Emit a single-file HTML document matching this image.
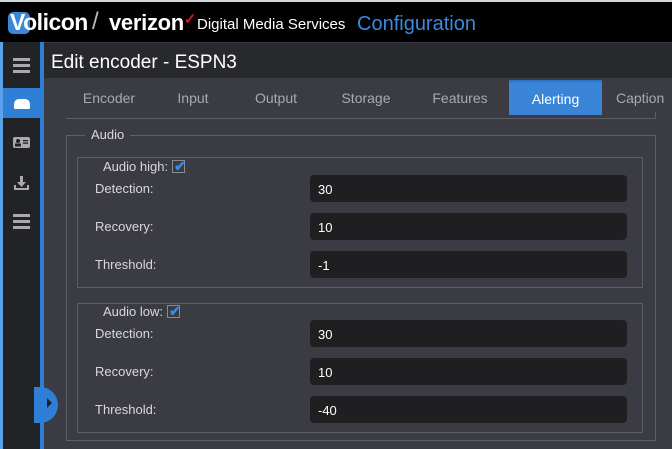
<!DOCTYPE html><html><head><style>
*{margin:0;padding:0;box-sizing:border-box}
body{width:672px;height:449px;overflow:hidden;background:#3b3c43;font-family:"Liberation Sans",sans-serif;position:relative}
.a{position:absolute}
.lab{position:absolute;color:#d8d8dc;font-size:13px}
.in{position:absolute;left:310px;width:317px;height:27px;background:#1f1f22;border-radius:4px;color:#fff;font-size:13px;padding:7px 0 0 8px}
.fs{position:absolute;border:1px solid #5e5f66}
.leg{position:absolute;background:#3b3c43;color:#d8d8dc;font-size:13px;padding:0 6px}
.cb{display:inline-block;width:13px;height:13px;border:1px solid #8a8b90;vertical-align:-2px;margin-left:4px;position:relative}
.tab{position:absolute;top:80px;height:35px;line-height:37px;color:#a9aab0;font-size:14px;text-align:center}
.bar{position:absolute;left:13px;width:17px;height:3px;background:#aaa}
</style></head><body>
<div class="a" style="left:0;top:0;width:672px;height:42px;background:#000"></div>
<div class="a" style="left:0;top:0;width:672px;height:2px;background:#cfd6de"></div>
<div class="a" style="left:8px;top:12px;width:22px;height:22px;background:#3b86d6;border-radius:5px"></div>
<div class="a" style="left:10px;top:9px;color:#fff;font-size:23px;font-weight:bold;letter-spacing:-0.5px">Volicon</div>
<div class="a" style="left:92px;top:8px;color:#bbb;font-size:24px">/</div>
<div class="a" style="left:109px;top:10px;color:#fff;font-size:22px;font-weight:bold;letter-spacing:-0.3px">verizon<span style="color:#e0141e;font-size:15px;vertical-align:6px">✓</span></div>
<div class="a" style="left:197px;top:16px;color:#fff;font-size:15px">Digital Media Services</div>
<div class="a" style="left:357px;top:13px;color:#3a8ae0;font-size:20px">Configuration</div>
<div class="a" style="left:0;top:42px;width:44px;height:407px;background:#222326"></div>
<div class="a" style="left:0;top:42px;width:3px;height:407px;background:#5aa2ea"></div>
<div class="a" style="left:40px;top:42px;width:4px;height:407px;background:#2f7fd6"></div>
<div class="a" style="left:3px;top:88px;width:37px;height:30px;background:#2f7fd6"></div>
<div class="bar" style="top:58px"></div><div class="bar" style="top:64px"></div><div class="bar" style="top:70px"></div>
<div class="a" style="left:14px;top:99px;width:16px;height:10px;background:#fff;border-radius:5px 5px 1px 1px"></div>
<svg class="a" style="left:13px;top:137px" width="17" height="11"><rect width="17" height="11" rx="2" fill="#aaa"/><circle cx="5" cy="4" r="2" fill="#222"/><rect x="2" y="6.5" width="6" height="3" fill="#222"/><rect x="10" y="3" width="5" height="1.3" fill="#222"/><rect x="10" y="5.5" width="5" height="1.3" fill="#222"/></svg>
<svg class="a" style="left:13px;top:175px" width="17" height="17"><path d="M7 1h3v6h3l-4.5 5L4 7h3z" fill="#aaa"/><path d="M1 10v5h15v-5h-2v3H3v-3z" fill="#aaa"/></svg>
<div class="bar" style="top:214px"></div><div class="bar" style="top:220px"></div><div class="bar" style="top:226px"></div>
<div class="a" style="left:34px;top:387px;width:24px;height:36px;background:#2f7fd6;border-radius:0 18px 18px 0"></div>
<div class="a" style="left:47px;top:398px;width:0;height:0;border-left:5px solid #222;border-top:5px solid transparent;border-bottom:5px solid transparent"></div>
<div class="a" style="left:44px;top:43px;width:628px;height:35px;background:#28292c"></div>
<div class="a" style="left:51px;top:52px;color:#fff;font-size:19px">Edit encoder - ESPN3</div>
<div class="tab" style="left:66px;width:86px">Encoder</div>
<div class="tab" style="left:162px;width:62px">Input</div>
<div class="tab" style="left:240px;width:72px">Output</div>
<div class="tab" style="left:330px;width:72px">Storage</div>
<div class="tab" style="left:420px;width:80px">Features</div>
<div class="tab" style="left:509px;width:93px;background:#3a85d8;color:#fff;border-top:2px solid #2f74c4;line-height:35px">Alerting</div>
<div class="tab" style="left:616px;width:70px;text-align:left">Caption</div>
<div class="a" style="left:66px;top:118px;width:590px;height:1px;background:#5e5f66"></div>
<div class="a" style="left:655px;top:112px;width:1px;height:7px;background:#5e5f66"></div>
<div class="fs" style="left:66px;top:135px;width:590px;height:306px"></div>
<div class="leg" style="left:85px;top:127px">Audio</div>
<div class="fs" style="left:77px;top:157px;width:566px;height:131px"></div>
<div class="leg" style="left:97px;top:159px">Audio high:<span class="cb"><span class="a" style="left:1px;top:-3px;color:#3a8ae8;font-size:14px;font-weight:bold">✔</span></span></div>
<div class="lab" style="left:95px;top:181px">Detection:</div><div class="in" style="top:175px">30</div>
<div class="lab" style="left:95px;top:219px">Recovery:</div><div class="in" style="top:213px">10</div>
<div class="lab" style="left:95px;top:257px">Threshold:</div><div class="in" style="top:251px">-1</div>
<div class="fs" style="left:77px;top:303px;width:566px;height:130px"></div>
<div class="leg" style="left:97px;top:304px">Audio low:<span class="cb"><span class="a" style="left:1px;top:-3px;color:#3a8ae8;font-size:14px;font-weight:bold">✔</span></span></div>
<div class="lab" style="left:95px;top:326px">Detection:</div><div class="in" style="top:320px">30</div>
<div class="lab" style="left:95px;top:364px">Recovery:</div><div class="in" style="top:358px">10</div>
<div class="lab" style="left:95px;top:402px">Threshold:</div><div class="in" style="top:396px">-40</div>
</body></html>
